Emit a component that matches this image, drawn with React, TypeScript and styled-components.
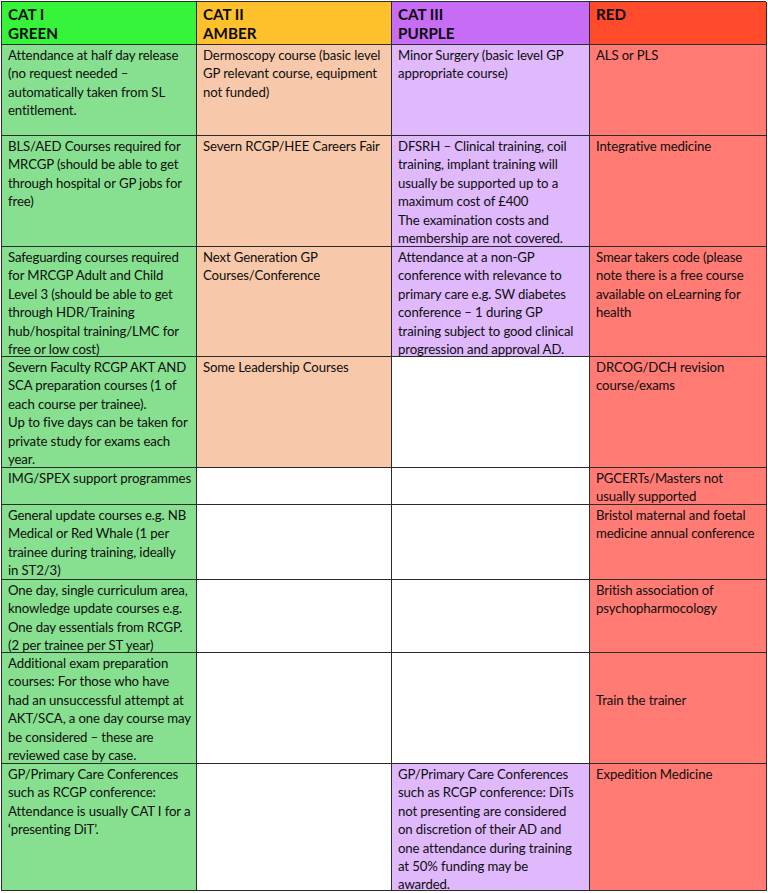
import React from "react";
import styled, { createGlobalStyle, css } from "styled-components";

const GlobalStyle = createGlobalStyle`
  html, body { margin: 0; padding: 0; background: #ffffff; }
  body { font-family: Lato, "Open Sans", "Liberation Sans", sans-serif; color: #141414; }
`;

type Tone = "green" | "amber" | "purple" | "red" | "white";

const headColors: Record<Tone, string> = {
  green: "#36f43a",
  amber: "#ffc12b",
  purple: "#c66cf5",
  red: "#ff4a2b",
  white: "#ffffff",
};

const bodyColors: Record<Tone, string> = {
  green: "#87e08f",
  amber: "#f7c9aa",
  purple: "#dfb9fb",
  red: "#ff7b74",
  white: "#ffffff",
};

const Page = styled.div`
  padding: 1px 0 0 1px;
`;

const Grid = styled.div`
  display: grid;
  grid-template-columns: 195px 195px 198px 177px;
  grid-template-rows: 43px 91px 111px 110px 111px 37px 75px 73px 111px 127px;
  width: 765px;
  border-top: 1px solid #2b2b2b;
  border-left: 1.5px solid #2b2b2b;
  box-sizing: border-box;
`;

const cellBase = css`
  box-sizing: border-box;
  border-right: 1px solid #2b2b2b;
  border-bottom: 1px solid #2b2b2b;
  padding: 1px 0 0 6px;
  white-space: pre;
  overflow: hidden;
`;

const HeadCell = styled.div<{ $tone: Tone }>`
  ${cellBase};
  background: ${(p) => headColors[p.$tone]};
  padding-top: 3px;
  font-weight: 700;
  font-size: 15.2px;
  line-height: 19px;
  color: #0a0a0a;
`;

const Cell = styled.div<{ $tone: Tone; $offset?: number }>`
  ${cellBase};
  background: ${(p) => bodyColors[p.$tone]};
  font-size: 13.2px;
  letter-spacing: -0.12px;
  line-height: 18.4px;
  padding-top: ${(p) => 1 + (p.$offset ?? 0) * 18.4}px;
  color: #0e0e0e;
`;

const headers: { tone: Tone; text: string }[] = [
  { tone: "green", text: "CAT I\nGREEN" },
  { tone: "amber", text: "CAT II\nAMBER" },
  { tone: "purple", text: "CAT III\nPURPLE" },
  { tone: "red", text: "RED" },
];

type CellData = { text: string; tone: Tone; offset?: number };

const rows: CellData[][] = [
  [
    { tone: "green", text: "Attendance at half day release\n(no request needed –\nautomatically taken from SL\nentitlement." },
    { tone: "amber", text: "Dermoscopy course (basic level\nGP relevant course, equipment\nnot funded)" },
    { tone: "purple", text: "Minor Surgery (basic level GP\nappropriate course)" },
    { tone: "red", text: "ALS or PLS" },
  ],
  [
    { tone: "green", text: "BLS/AED Courses required for\nMRCGP (should be able to get\nthrough hospital or GP jobs for\nfree)" },
    { tone: "amber", text: "Severn RCGP/HEE Careers Fair" },
    { tone: "purple", text: "DFSRH – Clinical training, coil\ntraining, implant training will\nusually be supported up to a\nmaximum cost of £400\nThe examination costs and\nmembership are not covered." },
    { tone: "red", text: "Integrative medicine" },
  ],
  [
    { tone: "green", text: "Safeguarding courses required\nfor MRCGP Adult and Child\nLevel 3 (should be able to get\nthrough HDR/Training\nhub/hospital training/LMC for\nfree or low cost)" },
    { tone: "amber", text: "Next Generation GP\nCourses/Conference" },
    { tone: "purple", text: "Attendance at a non-GP\nconference with relevance to\nprimary care e.g. SW diabetes\nconference – 1 during GP\ntraining subject to good clinical\nprogression and approval AD." },
    { tone: "red", text: "Smear takers code (please\nnote there is a free course\navailable on eLearning for\nhealth" },
  ],
  [
    { tone: "green", text: "Severn Faculty RCGP AKT AND\nSCA preparation courses (1 of\neach course per trainee).\nUp to five days can be taken for\nprivate study for exams each\nyear." },
    { tone: "amber", text: "Some Leadership Courses" },
    { tone: "white", text: "" },
    { tone: "red", text: "DRCOG/DCH revision\ncourse/exams" },
  ],
  [
    { tone: "green", text: "IMG/SPEX support programmes" },
    { tone: "white", text: "" },
    { tone: "white", text: "" },
    { tone: "red", text: "PGCERTs/Masters not\nusually supported" },
  ],
  [
    { tone: "green", text: "General update courses e.g. NB\nMedical or Red Whale (1 per\ntrainee during training, ideally\nin ST2/3)" },
    { tone: "white", text: "" },
    { tone: "white", text: "" },
    { tone: "red", text: "Bristol maternal and foetal\nmedicine annual conference" },
  ],
  [
    { tone: "green", text: "One day, single curriculum area,\nknowledge update courses e.g.\nOne day essentials from RCGP.\n(2 per trainee per ST year)" },
    { tone: "white", text: "" },
    { tone: "white", text: "" },
    { tone: "red", text: "British association of\npsychopharmocology" },
  ],
  [
    { tone: "green", text: "Additional exam preparation\ncourses: For those who have\nhad an unsuccessful attempt at\nAKT/SCA, a one day course may\nbe considered – these are\nreviewed case by case." },
    { tone: "white", text: "" },
    { tone: "white", text: "" },
    { tone: "red", text: "Train the trainer", offset: 2 },
  ],
  [
    { tone: "green", text: "GP/Primary Care Conferences\nsuch as RCGP conference:\nAttendance is usually CAT I for a\n‘presenting DiT’." },
    { tone: "white", text: "" },
    { tone: "purple", text: "GP/Primary Care Conferences\nsuch as RCGP conference: DiTs\nnot presenting are considered\non discretion of their AD and\none attendance during training\nat 50% funding may be\nawarded." },
    { tone: "red", text: "Expedition Medicine" },
  ],
];

export default function App() {
  return (
    <>
      <GlobalStyle />
      <Page>
        <Grid>
          {headers.map((h) => (
            <HeadCell key={h.text} $tone={h.tone}>
              {h.text}
            </HeadCell>
          ))}
          {rows.map((row, ri) =>
            row.map((c, ci) => (
              <Cell key={`${ri}-${ci}`} $tone={c.tone} $offset={c.offset}>
                {c.text}
              </Cell>
            ))
          )}
        </Grid>
      </Page>
    </>
  );
}
